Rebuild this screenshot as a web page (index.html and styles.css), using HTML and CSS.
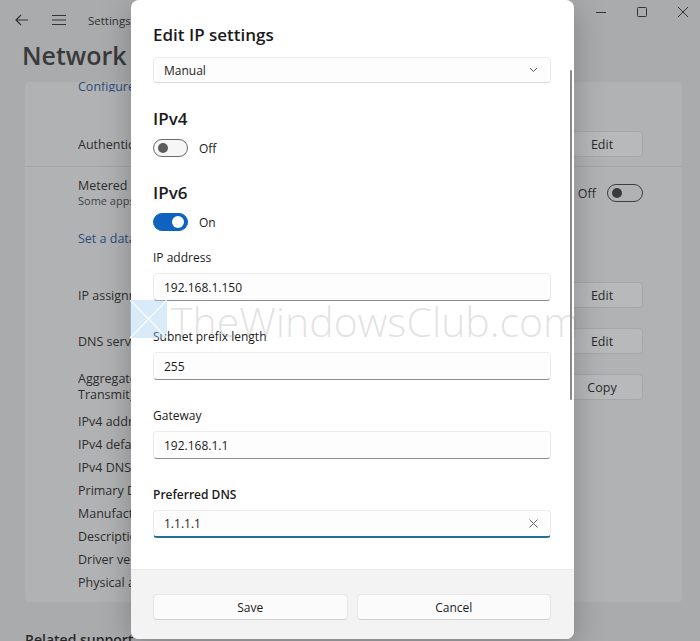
FILE: index.html
```html
<!DOCTYPE html>
<html lang="en">
<head>
    <meta charset="UTF-8">
    <meta name="viewport" content="width=device-width, initial-scale=1.0">
    <title>Settings - Edit IP settings</title>
    <link rel="stylesheet" href="styles.css">
</head>
<body>
    <div class="window">
        <div class="titlebar">
            <svg class="back" width="14" height="12" viewBox="0 0 14 12"><path d="M13 6H1.5M6 1L1 6l5 5" fill="none" stroke="#333" stroke-width="1.2"/></svg>
            <svg class="menu" width="14" height="10" viewBox="0 0 14 10"><path d="M0 .5h14M0 5h14M0 9.5h14" fill="none" stroke="#333" stroke-width="1.1"/></svg>
            <span class="app-name">Settings</span>
            <div class="win-controls">
                <svg width="10" height="10" viewBox="0 0 10 10"><path d="M0 5.5h10" stroke="#333" stroke-width="1"/></svg>
                <svg width="10" height="10" viewBox="0 0 10 10"><rect x=".5" y=".5" width="9" height="9" rx="1" fill="none" stroke="#333"/></svg>
                <svg width="10" height="10" viewBox="0 0 10 10"><path d="M0 0l10 10M10 0L0 10" stroke="#333" stroke-width="1"/></svg>
            </div>
        </div>

        <div class="page">
            <h1>Network &amp; internet</h1>

            <div class="card">
                <div class="row top-link"><a class="label">Configure security settings for this network</a></div>
                <div class="row auth">
                    <span class="label">Authentication settings</span>
                    <button class="bg-btn">Edit</button>
                </div>
                <div class="row metered">
                    <div class="label">
                        <div>Metered connection</div>
                        <div class="sub">Some apps might work differently to reduce data usage</div>
                    </div>
                    <div class="bg-toggle-wrap">Off <span class="bg-toggle"></span></div>
                </div>
                <div class="row limit"><a class="label">Set a data limit to help control data usage on this network</a></div>
                <div class="row ip">
                    <span class="label">IP assignment:</span>
                    <button class="bg-btn">Edit</button>
                </div>
                <div class="row dns">
                    <span class="label">DNS server assignment:</span>
                    <button class="bg-btn">Edit</button>
                </div>
                <div class="row agg">
                    <span class="label">Aggregated link speed (Receive/<br>Transmit):</span>
                    <button class="bg-btn">Copy</button>
                </div>
                <div class="details">
                    <div>IPv4 address:</div>
                    <div>IPv4 default gateway:</div>
                    <div>IPv4 DNS servers:</div>
                    <div>Primary DNS suffix:</div>
                    <div>Manufacturer:</div>
                    <div>Description:</div>
                    <div>Driver version:</div>
                    <div>Physical address (MAC):</div>
                </div>
            </div>

            <h2 class="related">Related support</h2>
        </div>
    </div>

    <div class="dialog">
        <div class="dialog-body">
            <h2 class="dialog-title">Edit IP settings</h2>

            <div class="select">
                <span>Manual</span>
                <svg width="9" height="6" viewBox="0 0 9 6"><path d="M1 1l3.5 3.5L8 1" fill="none" stroke="#555" stroke-width="1"/></svg>
            </div>

            <h3 class="section">IPv4</h3>
            <div class="toggle-row">
                <span class="toggle"></span>
                <span>Off</span>
            </div>

            <h3 class="section">IPv6</h3>
            <div class="toggle-row">
                <span class="toggle on"></span>
                <span>On</span>
            </div>

            <label class="field-label">IP address</label>
            <div class="input">192.168.1.150</div>

            <label class="field-label">Subnet prefix length</label>
            <div class="input">255</div>

            <label class="field-label">Gateway</label>
            <div class="input">192.168.1.1</div>

            <label class="field-label strong">Preferred DNS</label>
            <div class="input focused">
                <span>1.1.1.1</span>
                <svg width="9" height="9" viewBox="0 0 9 9"><path d="M.5.5l8 8M8.5.5l-8 8" stroke="#666" stroke-width="1"/></svg>
            </div>

            <div class="scrollbar"></div>
        </div>

        <div class="dialog-footer">
            <button class="btn">Save</button>
            <button class="btn">Cancel</button>
        </div>
    </div>

    <div class="watermark-logo">
        <svg width="37" height="38" viewBox="0 0 37 38"><rect width="37" height="38" fill="rgba(160,205,240,0.4)"/><path d="M0 0l37 38M37 0L0 38" stroke="rgba(255,255,255,0.8)" stroke-width="1.5"/></svg>
    </div>
    <div class="watermark">TheWindowsClub.com</div>
</body>
</html>
```

FILE: styles.css
```css
* {
    margin: 0;
    padding: 0;
    box-sizing: border-box;
}

body {
    width: 700px;
    height: 641px;
    overflow: hidden;
    position: relative;
    background: #a9abad;
    font-family: 'Open Sans', 'Noto Sans', sans-serif;
    color: #2d2d2d;
}

/* background settings window (dimmed) */
.window {
    height: 641px;
}

.titlebar {
    height: 40px;
    display: flex;
    align-items: center;
    padding-left: 15px;
}

.titlebar .menu {
    margin-left: 23px;
}

.app-name {
    margin-left: 22px;
    font-size: 11.5px;
    color: #333;
}

.win-controls {
    margin-left: auto;
    margin-right: 12px;
    align-self: flex-start;
    height: 24px;
    display: flex;
    align-items: center;
    gap: 31px;
}

.page {
    padding: 0 18px 0 25px;
}

h1 {
    margin-left: -3px;
    width: 109px;
    overflow: hidden;
    font-size: 25px;
    font-weight: 600;
    line-height: 30px;
    color: #3a3a3b;
    white-space: nowrap;
}

.card {
    margin-top: 12px;
    height: 520px;
    background: #b1b2b4;
    border-radius: 4px;
    font-size: 12.5px;
    color: #2e2e2e;
}

.row {
    display: flex;
    align-items: center;
    justify-content: space-between;
    padding: 0 39px 0 53px;
    white-space: nowrap;
}

/* the dialog covers everything right of x=131 */
.label,
.details div {
    width: 53px;
    overflow: hidden;
}

.row a {
    display: block;
    color: #2c4d7c;
}

.top-link {
    height: 10px;
    line-height: 10px;
}

.auth {
    margin-top: 30px;
    height: 45px;
    border-bottom: 1px solid #a4a5a7;
}

.metered {
    height: 52px;
    line-height: 15px;
}

.metered .sub {
    font-size: 11px;
    color: #444;
}

.limit {
    height: 38px;
}

.ip {
    margin-top: 15px;
    height: 46px;
}

.dns,
.agg {
    height: 46px;
}

.agg .label {
    line-height: 16px;
}

.details {
    padding-left: 53px;
    line-height: 23px;
    white-space: nowrap;
}

.bg-btn {
    width: 82px;
    height: 26px;
    background: #b8b9bb;
    border: 1px solid #a6a7a9;
    border-radius: 4px;
    font-family: inherit;
    font-size: 12.5px;
    color: #2b2b2b;
}

.bg-toggle-wrap {
    display: flex;
    align-items: center;
    gap: 11px;
}

.bg-toggle {
    width: 36px;
    height: 18px;
    border: 1px solid #3d3d3d;
    border-radius: 9px;
    position: relative;
}

.bg-toggle::after {
    content: '';
    position: absolute;
    left: 4px;
    top: 3px;
    width: 10px;
    height: 10px;
    border-radius: 50%;
    background: #3a3a3a;
}

.related {
    margin-top: 28px;
    font-size: 14px;
    font-weight: 600;
    color: #2a2a2a;
}

/* dialog */
.dialog {
    position: absolute;
    left: 131px;
    top: 0;
    width: 443px;
    height: 639px;
    background: #fff;
    border-radius: 8px;
    box-shadow: 0 8px 32px rgba(0, 0, 0, 0.25);
    display: flex;
    flex-direction: column;
    overflow: hidden;
    color: #1b1b1b;
}

.dialog-body {
    flex: 1;
    position: relative;
    padding: 23px 23px 0 22px;
    font-size: 12px;
}

.dialog-title {
    font-size: 17px;
    font-weight: 600;
    line-height: 24px;
}

.select,
.input {
    display: flex;
    align-items: center;
    justify-content: space-between;
    padding: 0 12px 0 10px;
    background: #fdfdfd;
    border: 1px solid #ececec;
    border-radius: 4px;
}

.select {
    margin-top: 10px;
    height: 26px;
    border-bottom-color: #dadada;
}

.section {
    margin-top: 24px;
    font-size: 17px;
    font-weight: 600;
    line-height: 24px;
}

.toggle-row {
    margin-top: 8px;
    display: flex;
    align-items: center;
    gap: 11px;
    height: 18px;
}

.toggle {
    width: 35px;
    height: 18px;
    border: 1px solid #6a6a6a;
    border-radius: 9px;
    background: #f6f6f6;
    position: relative;
}

.toggle::after {
    content: '';
    position: absolute;
    left: 4px;
    top: 3px;
    width: 10px;
    height: 10px;
    border-radius: 50%;
    background: #5c5c5c;
}

.toggle.on {
    background: #0f62be;
    border-color: #0f62be;
}

.toggle.on::after {
    left: auto;
    right: 3px;
    top: 2px;
    width: 12px;
    height: 12px;
    background: #fff;
}

.field-label {
    display: block;
    margin-top: 18px;
    line-height: 18px;
}

.input + .field-label {
    margin-top: 27px;
}

.field-label.strong {
    font-weight: 600;
}

.input {
    margin-top: 6px;
    height: 28px;
    border-bottom-color: #8d8d8d;
}

.input.focused {
    border-bottom: 2px solid #236f96;
}

.scrollbar {
    position: absolute;
    right: 2px;
    top: 70px;
    width: 2px;
    height: 330px;
    border-radius: 1px;
    background: #8a8a8a;
}

.dialog-footer {
    height: 70px;
    padding: 24px 23px 0 22px;
    background: #f3f3f3;
    border-top: 1px solid #e8e8e8;
    display: grid;
    grid-template-columns: 1fr 1fr;
    column-gap: 9px;
    align-items: start;
}

.btn {
    height: 26px;
    background: #fbfbfb;
    border: 1px solid #e6e6e6;
    border-bottom-color: #d2d2d2;
    border-radius: 4px;
    font-family: inherit;
    font-size: 12px;
    color: #1b1b1b;
}

/* watermark */
.watermark-logo {
    position: absolute;
    left: 130px;
    top: 300px;
    line-height: 0;
}

.watermark {
    position: absolute;
    left: 171px;
    top: 293px;
    font-size: 41px;
    font-weight: 300;
    color: rgba(140, 140, 140, 0.25);
    white-space: nowrap;
    pointer-events: none;
}
```
